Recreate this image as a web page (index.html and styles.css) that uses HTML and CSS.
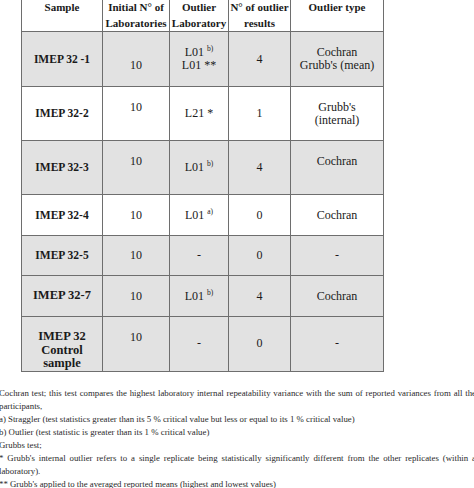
FILE: index.html
```html
<!DOCTYPE html>
<html>
<head>
<meta charset="utf-8">
<link rel="stylesheet" href="styles.css">
</head>
<body>
<table class="grid">
  <colgroup>
    <col class="c1"><col class="c2"><col class="c3"><col class="c4"><col class="c5">
  </colgroup>
  <thead>
    <tr class="head">
      <th>Sample</th>
      <th>Initial N° of Laboratories</th>
      <th>Outlier Laboratory</th>
      <th>N° of outlier results</th>
      <th>Outlier type</th>
    </tr>
  </thead>
  <tbody>
    <tr class="gray r55">
      <td class="name">IMEP 32 -1</td>
      <td class="down">10</td>
      <td>L01 <sup>b)</sup><br>L01 **</td>
      <td>4</td>
      <td>Cochran<br>Grubb's (mean)</td>
    </tr>
    <tr class="r54">
      <td class="name">IMEP 32-2</td>
      <td class="up">10</td>
      <td>L21 *</td>
      <td>1</td>
      <td>Grubb's<br>(internal)</td>
    </tr>
    <tr class="gray r54">
      <td class="name">IMEP 32-3</td>
      <td class="up">10</td>
      <td>L01 <sup>b)</sup></td>
      <td>4</td>
      <td class="up">Cochran</td>
    </tr>
    <tr class="r41">
      <td class="name">IMEP 32-4</td>
      <td>10</td>
      <td>L01 <sup>a)</sup></td>
      <td>0</td>
      <td>Cochran</td>
    </tr>
    <tr class="gray r40">
      <td class="name">IMEP 32-5</td>
      <td>10</td>
      <td>-</td>
      <td>0</td>
      <td>-</td>
    </tr>
    <tr class="gray r41">
      <td class="name big">IMEP 32-7</td>
      <td>10</td>
      <td>L01 <sup>b)</sup></td>
      <td>4</td>
      <td>Cochran</td>
    </tr>
    <tr class="gray r54">
      <td class="name big down">IMEP 32<br>Control<br>sample</td>
      <td class="up">10</td>
      <td>-</td>
      <td>0</td>
      <td>-</td>
    </tr>
  </tbody>
</table>
<div class="notes">
  <p class="just">Cochran test; this test compares the highest laboratory internal repeatability variance with the sum of reported variances from all the participants,</p>
  <p>a) Straggler (test statistics greater than its 5 % critical value but less or equal to its 1 % critical value)</p>
  <p>b) Outlier (test statistic is greater than its 1 % critical value)</p>
  <p>Grubbs test;</p>
  <p class="just">* Grubb's internal outlier refers to a single replicate being statistically significantly different from the other replicates (within a laboratory).</p>
  <p>** Grubb's applied to the averaged reported means (highest and lowest values)</p>
</div>
</body>
</html>
```
FILE: styles.css
```css
html, body {
  margin: 0;
  padding: 0;
  background: #ffffff;
}
body {
  font-family: "Liberation Serif", "Times New Roman", serif;
  color: #1a1a1a;
  width: 474px;
  overflow: hidden;
}
.grid {
  border-collapse: collapse;
  table-layout: fixed;
  width: 362px;
  margin: -3px 0 0 21px;
  border: 1px solid #6e6e6e;
}
.c1 { width: 81px; }
.c2 { width: 67px; }
.c3 { width: 59px; }
.c4 { width: 62px; }
.c5 { width: 93px; }
.grid th,
.grid td {
  border: 1px solid #6e6e6e;
  text-align: center;
  padding: 0;
}
.grid th {
  font-size: 11px;
  font-weight: bold;
  line-height: 16px;
  vertical-align: top;
  padding-top: 1px;
}
.grid td {
  font-size: 12px;
  line-height: 13px;
  vertical-align: middle;
}
.gray td {
  background: #e2e2e2;
}
.r55 { height: 55px; }
.r54 { height: 54px; }
.r41 { height: 41px; }
.r40 { height: 40px; }
.grid td.name {
  font-weight: bold;
  font-size: 11.5px;
}
.grid td.big {
  font-size: 12.5px;
  line-height: 13.5px;
}
.grid td.down { padding-top: 13px; }
.grid td.up { padding-bottom: 13px; }
sup {
  font-size: 7.5px;
  line-height: 0;
  vertical-align: 5px;
}
.notes {
  margin: 15px -2px 0 -1px;
  font-size: 8.8px;
  line-height: 13px;
  color: #2a2a2a;
}
.notes p {
  margin: 0;
}
.notes .just {
  text-align: justify;
}
```
